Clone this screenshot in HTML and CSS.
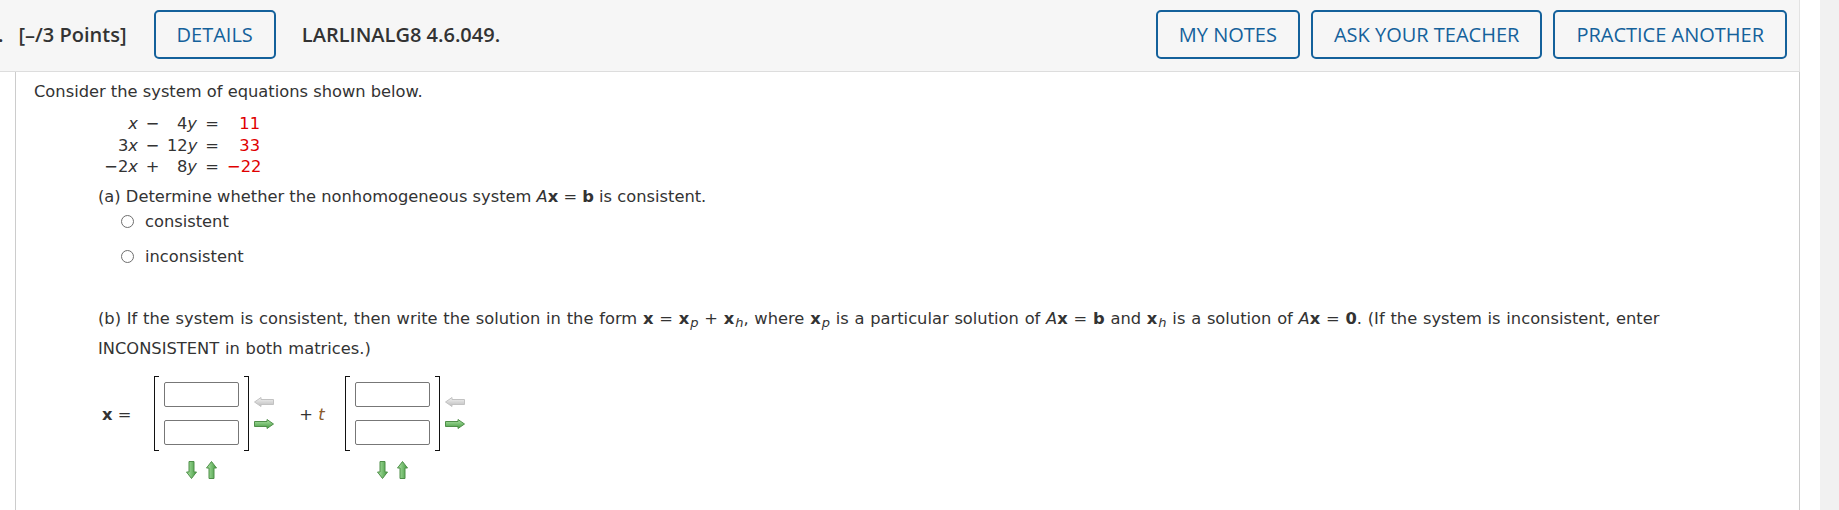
FILE: index.html
```html
<!DOCTYPE html>
<html lang="en">
<head>
<meta charset="utf-8">
<title>LARLINALG8 4.6.049</title>
<link rel="stylesheet" href="styles.css">
</head>
<body>
<div class="page">
  <main class="main">
    <header class="qhead">
      <span class="qnum">.</span>
      <span class="points">[–/3 Points]</span>
      <button class="btn">DETAILS</button>
      <span class="qid">LARLINALG8 4.6.049.</span>
      <div class="actions">
        <button class="btn">MY NOTES</button>
        <button class="btn">ASK YOUR TEACHER</button>
        <button class="btn">PRACTICE ANOTHER</button>
      </div>
    </header>

    <section class="qbody">
      <p class="intro">Consider the system of equations shown below.</p>

      <div class="eqs">
        <span class="c1"><i>x</i></span><span class="c2">−</span><span class="c3">4<i>y</i></span><span class="c4">=</span><span class="c5">11</span>
        <span class="c1">3<i>x</i></span><span class="c2">−</span><span class="c3">12<i>y</i></span><span class="c4">=</span><span class="c5">33</span>
        <span class="c1">−2<i>x</i></span><span class="c2">+</span><span class="c3">8<i>y</i></span><span class="c4">=</span><span class="c5">−22</span>
      </div>

      <div class="part">
        <p class="line">(a) Determine whether the nonhomogeneous system <i>A</i><b>x</b> = <b>b</b> is consistent.</p>
        <label class="opt"><span class="radio"></span>consistent</label>
        <label class="opt"><span class="radio"></span>inconsistent</label>
      </div>

      <div class="part partb">
        <p class="para">(b) If the system is consistent, then write the solution in the form <b>x</b> = <b>x</b><sub><i>p</i></sub> + <b>x</b><sub><i>h</i></sub>, where <b>x</b><sub><i>p</i></sub> is a particular solution of <i>A</i><b>x</b> = <b>b</b> and <b>x</b><sub><i>h</i></sub> is a solution of <i>A</i><b>x</b> = <b>0</b>. (If the system is inconsistent, enter INCONSISTENT in both matrices.)</p>

        <div class="answer">
          <span class="lhs"><b>x</b> =</span>

          <div class="mblock">
            <div class="mrow">
              <span class="br br-l"></span>
              <div class="cells">
                <span class="cell"></span>
                <span class="cell"></span>
              </div>
              <span class="br br-r"></span>
              <div class="side">
                <svg class="harrow" viewBox="0 0 20 10" width="20" height="10"><defs><linearGradient id="gg1" x1="0" y1="0" x2="0" y2="1"><stop offset="0" stop-color="#f4f4f4"/><stop offset="1" stop-color="#bcbcbc"/></linearGradient></defs><polygon points="0.5,5 7,0.5 7,2.5 19.5,2.5 19.5,7.5 7,7.5 7,9.5" fill="url(#gg1)" stroke="#c2c2c2" stroke-width="1"/></svg>
                <svg class="harrow" viewBox="0 0 20 10" width="20" height="10"><defs><linearGradient id="gr1" x1="0" y1="0" x2="0" y2="1"><stop offset="0" stop-color="#b0e6a8"/><stop offset="1" stop-color="#459a41"/></linearGradient></defs><polygon points="19.5,5 13,0.5 13,2.5 0.5,2.5 0.5,7.5 13,7.5 13,9.5" fill="url(#gr1)" stroke="#4f8f49" stroke-width="1"/></svg>
              </div>
            </div>
            <div class="vctl">
              <svg viewBox="0 0 11 18" width="11" height="18"><defs><linearGradient id="gd1" x1="0" y1="0" x2="1" y2="0"><stop offset="0" stop-color="#b0e6a8"/><stop offset="1" stop-color="#459a41"/></linearGradient></defs><polygon points="3,0.5 8,0.5 8,11 10.5,11 5.5,17.5 0.5,11 3,11" fill="url(#gd1)" stroke="#4f8f49" stroke-width="1"/></svg>
              <svg viewBox="0 0 11 18" width="11" height="18"><polygon points="3,17.5 8,17.5 8,7 10.5,7 5.5,0.5 0.5,7 3,7" fill="url(#gd1)" stroke="#4f8f49" stroke-width="1"/></svg>
            </div>
          </div>

          <span class="plus">+ <i class="tvar">t</i></span>

          <div class="mblock">
            <div class="mrow">
              <span class="br br-l"></span>
              <div class="cells">
                <span class="cell"></span>
                <span class="cell"></span>
              </div>
              <span class="br br-r"></span>
              <div class="side">
                <svg class="harrow" viewBox="0 0 20 10" width="20" height="10"><polygon points="0.5,5 7,0.5 7,2.5 19.5,2.5 19.5,7.5 7,7.5 7,9.5" fill="url(#gg1)" stroke="#c2c2c2" stroke-width="1"/></svg>
                <svg class="harrow" viewBox="0 0 20 10" width="20" height="10"><polygon points="19.5,5 13,0.5 13,2.5 0.5,2.5 0.5,7.5 13,7.5 13,9.5" fill="url(#gr1)" stroke="#4f8f49" stroke-width="1"/></svg>
              </div>
            </div>
            <div class="vctl">
              <svg viewBox="0 0 11 18" width="11" height="18"><polygon points="3,0.5 8,0.5 8,11 10.5,11 5.5,17.5 0.5,11 3,11" fill="url(#gd1)" stroke="#4f8f49" stroke-width="1"/></svg>
              <svg viewBox="0 0 11 18" width="11" height="18"><polygon points="3,17.5 8,17.5 8,7 10.5,7 5.5,0.5 0.5,7 3,7" fill="url(#gd1)" stroke="#4f8f49" stroke-width="1"/></svg>
            </div>
          </div>
        </div>
      </div>
    </section>
  </main>
  <div class="gutter"></div>
  <div class="track"></div>
</div>
</body>
</html>
```

FILE: styles.css
```css
* { box-sizing: border-box; }

html, body {
  margin: 0;
  padding: 0;
  background: #ffffff;
}

body {
  font-family: "DejaVu Sans", Verdana, sans-serif;
  font-size: 16.3px;
  color: #333333;
}

.page {
  display: flex;
  height: 510px;
  overflow: hidden;
}

.main {
  width: 1800px;
  flex: 0 0 1800px;
  display: flex;
  flex-direction: column;
}

.gutter {
  flex: 0 0 20px;
  background: #ffffff;
}

.track {
  flex: 1 1 auto;
  background: #f1f1f1;
}

/* ---------- header ---------- */
.qhead {
  height: 72px;
  flex: 0 0 72px;
  display: flex;
  align-items: center;
  padding: 0 12px 2px 0;
  background: #f6f6f6;
  border-bottom: 1px solid #dddddd;
  border-right: 1px solid #e3e3e3;
  font-family: "Open Sans", "Liberation Sans", sans-serif;
  font-size: 20px;
  color: #333333;
}

.qnum {
  font-weight: 600;
  margin-left: -2px;
  margin-right: 15px;
}

.points {
  font-weight: 600;
  margin-right: 27px;
}

.qid {
  font-weight: 600;
  margin-left: 26px;
}

.actions {
  margin-left: auto;
  display: flex;
  gap: 11px;
}

.btn {
  height: 49px;
  padding: 0 21px;
  border: 2px solid #14619b;
  border-radius: 5px;
  background: transparent;
  color: #14619b;
  font-family: "Open Sans", "Liberation Sans", sans-serif;
  font-size: 20px;
  font-weight: 500;
  line-height: 1;
  white-space: nowrap;
}

/* ---------- body ---------- */
.qbody {
  flex: 1 1 auto;
  margin-left: 15px;
  border-left: 1px solid #cccccc;
  border-right: 1px solid #cccccc;
  padding: 10px 18px 0 18px;
  background: #ffffff;
}

.intro {
  margin: 0;
  line-height: 20px;
}

.eqs {
  display: grid;
  grid-template-columns: 38px 29px 30px 30px 33px;
  grid-auto-rows: 21.5px;
  align-items: center;
  margin: 11px 0 0 66px;
  line-height: 21.5px;
}

.eqs .c1, .eqs .c3, .eqs .c5 { text-align: right; }
.eqs .c2, .eqs .c4 { text-align: center; }
.eqs .c5 { color: #e00000; }

.part {
  margin-left: 64px;
}

.line {
  margin: 9px 0 0 0;
  line-height: 20px;
}

.opt {
  display: flex;
  align-items: center;
  height: 30px;
  padding-left: 23px;
  margin-bottom: 5px;
}

.radio {
  width: 13px;
  height: 13px;
  border: 1px solid #6e6e6e;
  border-radius: 50%;
  background: #ffffff;
  margin-right: 11px;
}

.partb {
  margin-top: 32px;
}

.para {
  margin: 0;
  padding-right: 70px;
  line-height: 30px;
  word-spacing: 0.6px;
}

sub {
  font-size: 0.8em;
  line-height: 0;
  vertical-align: -0.3em;
  margin-left: 1px;
}

/* ---------- matrix answer ---------- */
.answer {
  display: flex;
  align-items: flex-start;
  margin: 12px 0 0 4px;
}

.lhs {
  margin-top: 29px;
  margin-right: 23px;
  line-height: 20px;
}

.plus {
  margin: 29px 20px 0 25px;
  line-height: 20px;
}

.tvar {
  color: #8a5a2a;
}

.mblock {
  display: flex;
  flex-direction: column;
}

.mrow {
  display: flex;
  align-items: center;
}

.br {
  width: 5px;
  height: 75px;
  border-top: 1.5px solid #111111;
  border-bottom: 1.5px solid #111111;
}

.br-l { border-left: 1.5px solid #111111; }
.br-r { border-right: 1.5px solid #111111; }

.cells {
  display: flex;
  flex-direction: column;
  gap: 13px;
  margin: 0 5px;
}

.cell {
  display: block;
  width: 75px;
  height: 25px;
  border: 1px solid #777777;
  border-radius: 2px;
  background: #ffffff;
}

.side {
  display: flex;
  flex-direction: column;
  gap: 12px;
  margin-left: 5px;
}

.harrow { display: block; }

.vctl {
  display: flex;
  justify-content: center;
  gap: 9px;
  width: 95px;
  margin-top: 10px;
}

.vctl svg { display: block; }
```
